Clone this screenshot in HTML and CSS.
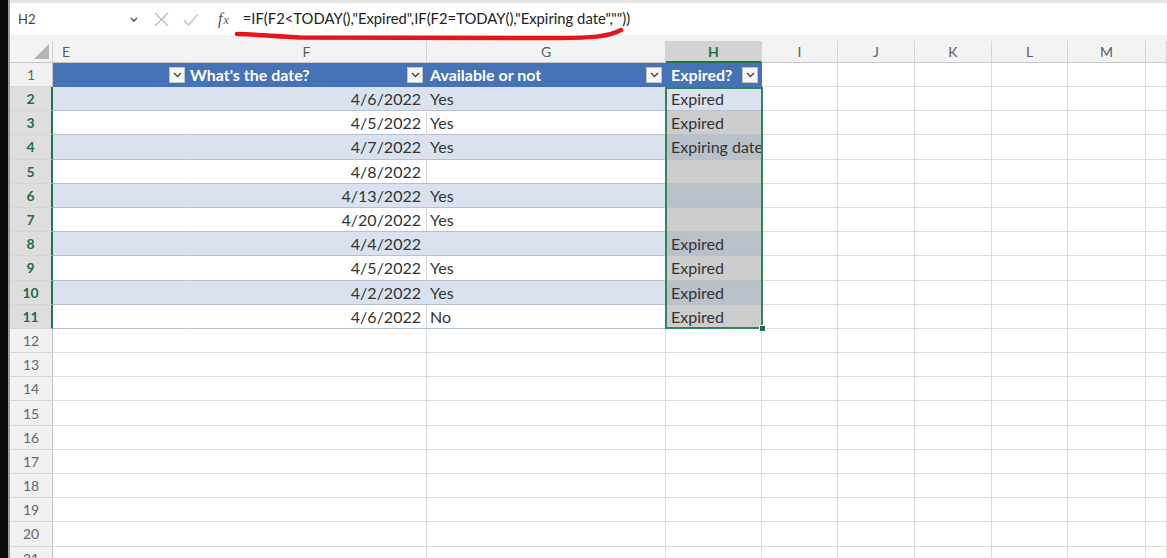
FILE: index.html
```html
<!DOCTYPE html>
<html lang="en">
<head>
<meta charset="utf-8">
<title>Expired dates</title>
<link rel="stylesheet" href="styles.css">
</head>
<body>
<div class="app">
  <div class="edge"></div>
  <div class="main">
    <div class="fbar">
      <div class="namebox">
        <span>H2</span>
        <svg class="nb-chev" width="8" height="5" viewBox="0 0 8 5"><path d="M1 1l3 3 3-3" fill="none" stroke="#444" stroke-width="1.3"/></svg>
      </div>
      <svg class="ico-x" width="15" height="15" viewBox="0 0 15 15"><path d="M1 1L14 14M14 1L1 14" stroke="#b9b9b9" stroke-width="1.2"/></svg>
      <svg class="ico-ok" width="16" height="13" viewBox="0 0 16 13"><path d="M1 7l4.5 5L15 1" fill="none" stroke="#c2c2c2" stroke-width="1.2"/></svg>
      <span class="fx"><span class="fx-f">f</span><span class="fx-x">x</span></span>
      <div class="formula">=IF(F2&lt;TODAY(),"Expired",IF(F2=TODAY(),"Expiring date",""))</div>
    </div>
    <svg class="redline" width="650" height="45" viewBox="0 0 650 45"><path d="M237 34 C 260 34.5, 280 37, 300 37.5 L 560 38 C 590 38, 608 37, 621 30" fill="none" stroke="#e8141c" stroke-width="4.5" stroke-linecap="round"/></svg>
    <div class="gap"></div>

    <div class="sheet">
      <div class="row hdr">
        <div class="corner"><svg width="15" height="15" viewBox="0 0 15 15"><path d="M0 15L15 0V15Z" fill="#b4b4b4"/></svg></div>
        <div class="ch e">E</div><div class="ch f">F</div><div class="ch">G</div><div class="ch on">H</div><div class="ch">I</div><div class="ch">J</div><div class="ch">K</div><div class="ch">L</div><div class="ch">M</div><div class="ch"></div>
      </div>

      <div class="row">
        <div class="rh">1</div>
        <div class="c th e"><span class="dd"><svg width="9" height="6" viewBox="0 0 9 6"><path d="M1 1l3.5 3.5L8 1" fill="none" stroke="#444" stroke-width="1.4"/></svg></span></div>
        <div class="c th f"><span class="tx">What's the date?</span><span class="dd"><svg width="9" height="6" viewBox="0 0 9 6"><path d="M1 1l3.5 3.5L8 1" fill="none" stroke="#444" stroke-width="1.4"/></svg></span></div>
        <div class="c th g"><span class="tx">Available or not</span><span class="dd"><svg width="9" height="6" viewBox="0 0 9 6"><path d="M1 1l3.5 3.5L8 1" fill="none" stroke="#444" stroke-width="1.4"/></svg></span></div>
        <div class="c th h"><span class="tx">Expired?</span><span class="dd"><svg width="9" height="6" viewBox="0 0 9 6"><path d="M1 1l3.5 3.5L8 1" fill="none" stroke="#444" stroke-width="1.4"/></svg></span></div>
        <div class="c"></div><div class="c"></div><div class="c"></div><div class="c"></div><div class="c"></div><div class="c"></div>
      </div>

      <div class="row">
        <div class="rh on">2</div>
        <div class="c band e"></div><div class="c band f">4/6/2022</div><div class="c band g">Yes</div><div class="c band h">Expired</div>
        <div class="c"></div><div class="c"></div><div class="c"></div><div class="c"></div><div class="c"></div><div class="c"></div>
      </div>
      <div class="row">
        <div class="rh on">3</div>
        <div class="c wt e"></div><div class="c wt f">4/5/2022</div><div class="c wt g">Yes</div><div class="c wt h shade">Expired</div>
        <div class="c"></div><div class="c"></div><div class="c"></div><div class="c"></div><div class="c"></div><div class="c"></div>
      </div>
      <div class="row">
        <div class="rh on">4</div>
        <div class="c band e"></div><div class="c band f">4/7/2022</div><div class="c band g">Yes</div><div class="c band h shade">Expiring date</div>
        <div class="c"></div><div class="c"></div><div class="c"></div><div class="c"></div><div class="c"></div><div class="c"></div>
      </div>
      <div class="row">
        <div class="rh on">5</div>
        <div class="c wt e"></div><div class="c wt f">4/8/2022</div><div class="c wt g"></div><div class="c wt h shade"></div>
        <div class="c"></div><div class="c"></div><div class="c"></div><div class="c"></div><div class="c"></div><div class="c"></div>
      </div>
      <div class="row">
        <div class="rh on">6</div>
        <div class="c band e"></div><div class="c band f">4/13/2022</div><div class="c band g">Yes</div><div class="c band h shade"></div>
        <div class="c"></div><div class="c"></div><div class="c"></div><div class="c"></div><div class="c"></div><div class="c"></div>
      </div>
      <div class="row">
        <div class="rh on">7</div>
        <div class="c wt e"></div><div class="c wt f">4/20/2022</div><div class="c wt g">Yes</div><div class="c wt h shade"></div>
        <div class="c"></div><div class="c"></div><div class="c"></div><div class="c"></div><div class="c"></div><div class="c"></div>
      </div>
      <div class="row">
        <div class="rh on">8</div>
        <div class="c band e"></div><div class="c band f">4/4/2022</div><div class="c band g"></div><div class="c band h shade">Expired</div>
        <div class="c"></div><div class="c"></div><div class="c"></div><div class="c"></div><div class="c"></div><div class="c"></div>
      </div>
      <div class="row">
        <div class="rh on">9</div>
        <div class="c wt e"></div><div class="c wt f">4/5/2022</div><div class="c wt g">Yes</div><div class="c wt h shade">Expired</div>
        <div class="c"></div><div class="c"></div><div class="c"></div><div class="c"></div><div class="c"></div><div class="c"></div>
      </div>
      <div class="row">
        <div class="rh on">10</div>
        <div class="c band e"></div><div class="c band f">4/2/2022</div><div class="c band g">Yes</div><div class="c band h shade">Expired</div>
        <div class="c"></div><div class="c"></div><div class="c"></div><div class="c"></div><div class="c"></div><div class="c"></div>
      </div>
      <div class="row">
        <div class="rh on">11</div>
        <div class="c wt e"></div><div class="c wt f">4/6/2022</div><div class="c wt g">No</div><div class="c wt h shade">Expired</div>
        <div class="c"></div><div class="c"></div><div class="c"></div><div class="c"></div><div class="c"></div><div class="c"></div>
      </div>

      <div class="row"><div class="rh">12</div><div class="c ef"></div><div class="c"></div><div class="c"></div><div class="c"></div><div class="c"></div><div class="c"></div><div class="c"></div><div class="c"></div><div class="c"></div></div>
      <div class="row"><div class="rh">13</div><div class="c ef"></div><div class="c"></div><div class="c"></div><div class="c"></div><div class="c"></div><div class="c"></div><div class="c"></div><div class="c"></div><div class="c"></div></div>
      <div class="row"><div class="rh">14</div><div class="c ef"></div><div class="c"></div><div class="c"></div><div class="c"></div><div class="c"></div><div class="c"></div><div class="c"></div><div class="c"></div><div class="c"></div></div>
      <div class="row"><div class="rh">15</div><div class="c ef"></div><div class="c"></div><div class="c"></div><div class="c"></div><div class="c"></div><div class="c"></div><div class="c"></div><div class="c"></div><div class="c"></div></div>
      <div class="row"><div class="rh">16</div><div class="c ef"></div><div class="c"></div><div class="c"></div><div class="c"></div><div class="c"></div><div class="c"></div><div class="c"></div><div class="c"></div><div class="c"></div></div>
      <div class="row"><div class="rh">17</div><div class="c ef"></div><div class="c"></div><div class="c"></div><div class="c"></div><div class="c"></div><div class="c"></div><div class="c"></div><div class="c"></div><div class="c"></div></div>
      <div class="row"><div class="rh">18</div><div class="c ef"></div><div class="c"></div><div class="c"></div><div class="c"></div><div class="c"></div><div class="c"></div><div class="c"></div><div class="c"></div><div class="c"></div></div>
      <div class="row"><div class="rh">19</div><div class="c ef"></div><div class="c"></div><div class="c"></div><div class="c"></div><div class="c"></div><div class="c"></div><div class="c"></div><div class="c"></div><div class="c"></div></div>
      <div class="row"><div class="rh">20</div><div class="c ef"></div><div class="c"></div><div class="c"></div><div class="c"></div><div class="c"></div><div class="c"></div><div class="c"></div><div class="c"></div><div class="c"></div></div>
      <div class="row"><div class="rh">21</div><div class="c ef"></div><div class="c"></div><div class="c"></div><div class="c"></div><div class="c"></div><div class="c"></div><div class="c"></div><div class="c"></div><div class="c"></div></div>

      <div class="selection"><span class="handle"></span></div>
    </div>
  </div>
</div>
</body>
</html>
```
FILE: styles.css
```css
* { box-sizing: border-box; }
html, body { margin: 0; padding: 0; height: 100%; overflow: hidden; background: #fff; }
body { font-family: Lato, "Liberation Sans", sans-serif; color: #333; }

.app { display: flex; height: 558px; }
.edge { width: 8px; flex: none; background: #0c0c0c; }
.main { flex: 1; min-width: 0; border-left: 2px solid #9c9c9c; display: flex; flex-direction: column; position: relative; }

/* formula bar */
.fbar { height: 35px; flex: none; border-top: 3px solid #e4e4e4; display: flex; align-items: center; background: #fff; }
.namebox { width: 138px; display: flex; align-items: center; justify-content: space-between; padding: 0 10px 0 8px; font-size: 13px; color: #444; }
.nb-chev { margin-top: 1px; }
.ico-x { margin-left: 6px; }
.ico-ok { margin-left: 14px; }
.fx { margin-left: 19px; font-family: "Liberation Serif", serif; font-style: italic; color: #555; display: flex; align-items: baseline; }
.fx-f { font-size: 16px; }
.fx-x { font-size: 12px; margin-left: 1px; }
.formula { margin-left: 14px; margin-top: -2px; font-size: 14.8px; color: #222; white-space: nowrap; }
.redline { position: absolute; left: -10px; top: 0; pointer-events: none; z-index: 5; }
.gap { height: 6px; flex: none; background: #f4f4f4; }

/* sheet */
.sheet { position: relative; flex: 1; overflow: hidden; }
.row { display: grid; grid-template-columns: 43px 134px 240px 239px 96px 76px 77px 77px 76px 78px 1fr; height: 24.2px; }
.row.hdr { height: 22px; }
.sheet > .row:nth-child(2) { height: 24px; }

.corner { background: #f3f3f3; border-right: 1px solid #cfcfcf; border-bottom: 1px solid #c8c8c8; display: flex; align-items: flex-end; justify-content: flex-end; padding: 0 3px 3px 0; }
.ch { background: #f3f3f3; border-right: 1px solid #d4d4d4; border-bottom: 1px solid #c8c8c8; font-size: 14px; color: #5c5c5c; display: flex; align-items: center; justify-content: center; }
.ch.e { justify-content: flex-start; padding-left: 9px; border-right-color: transparent; }
.ch.on { background: #d3d3d3; color: #1f6e43; font-weight: 700; border-bottom: 2px solid #217346; }

.rh { background: #f1f1f1; border-right: 1px solid #c6c6c6; border-bottom: 1px solid #d6d6d6; font-size: 14px; color: #666; display: flex; align-items: center; justify-content: center; }
.rh.on { background: #dedede; color: #1f6e43; font-weight: 700; border-right: 2px solid #217346; }

.c { border-right: 1px solid #dcdcdc; border-bottom: 1px solid #dcdcdc; font-size: 16px; color: #333; display: flex; align-items: center; white-space: nowrap; overflow: hidden; }
.c.ef { grid-column: span 2; }

.th { background: #4672b8; border-color: #4672b8; color: #fff; font-weight: 700; justify-content: space-between; }
.th.e { justify-content: flex-end; }
.th.f, .th.g { padding-left: 3px; }
.th.h { padding-left: 5px; }
.th .dd { width: 16px; height: 16px; flex: none; margin-right: 3px; background: #f7f7f7; border: 1px solid #c4c4c4; display: flex; align-items: center; justify-content: center; }
.th.e .dd { margin-right: 1px; }

.band { background: #d9e2ee; border-bottom-color: #b6c1ce; border-right-color: transparent; }
.wt { background: #fff; border-bottom-color: #b6c1ce; border-right-color: #d6d6d6; }
.wt.e { border-right-color: transparent; }
.f.band, .f.wt { justify-content: flex-end; padding-right: 5px; }
.g.band, .g.wt { padding-left: 3px; }
.h.band, .h.wt { padding-left: 5px; }
.band.shade { background: #b9c1ca; }
.wt.shade { background: #cdcdcd; }

.selection { position: absolute; left: 655px; top: 46px; width: 98px; height: 242px; border: 2px solid #2f8559; pointer-events: none; }
.handle { position: absolute; right: -5px; bottom: -5px; width: 7px; height: 7px; background: #1d6b43; border: 1px solid #fff; }
```
